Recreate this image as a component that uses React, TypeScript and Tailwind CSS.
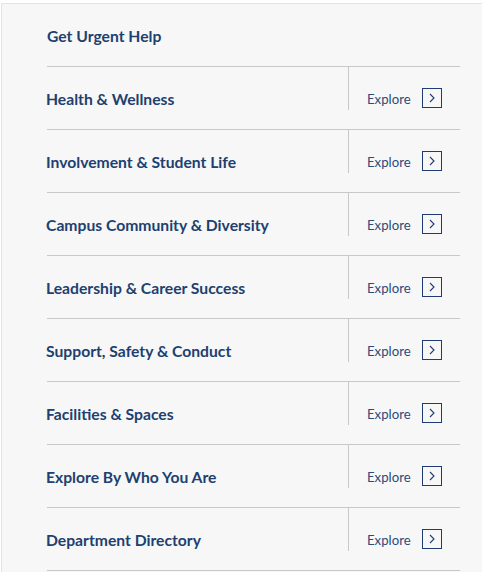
import React from "react";

const sections = [
  "Health & Wellness",
  "Involvement & Student Life",
  "Campus Community & Diversity",
  "Leadership & Career Success",
  "Support, Safety & Conduct",
  "Facilities & Spaces",
  "Explore By Who You Are",
  "Department Directory",
];

const ChevronBox = () => (
  <span className="flex h-5 w-5 items-center justify-center border border-[#1f3d73]">
    <svg width="8" height="10" viewBox="0 0 8 10" fill="none">
      <path d="M2 1l4 4-4 4" stroke="#1f3d73" strokeWidth="1.1" />
    </svg>
  </span>
);

const App = () => {
  return (
    <div
      className="h-[572px] w-[482px] overflow-hidden bg-white pt-[3px] pl-[1px]"
      style={{ fontFamily: '"Lato", "Open Sans", sans-serif' }}
    >
      <div className="h-full border-t border-l border-[#e3e3e3] bg-[#f7f7f7] pl-[44px] pr-[22px]">
        {/* Urgent help */}
        <div className="flex h-[62px] items-center pt-[3px] pl-[1px]">
          <span className="text-[15.7px] font-bold text-[#213f6f]">Get Urgent Help</span>
        </div>

        {/* Sections */}
        {sections.map((s) => (
          <div key={s} className="ml-[1px] flex h-[63px] border-t border-[#c8c8c8]">
            <div className="flex flex-1 items-center pt-[3px]">
              <span className="-ml-[1px] text-[15.7px] font-bold text-[#213f6f]">{s}</span>
            </div>
            <div className="w-[112px]">
              <div className="flex h-[43px] items-end gap-[11px] border-l border-[#c8c8c8] pb-[2px] pl-[18px]">
                <span className="-mb-[2px] text-[13.2px] text-[#2c4a7c]">Explore</span>
                <ChevronBox />
              </div>
            </div>
          </div>
        ))}
        <div className="ml-[1px] border-t border-[#c8c8c8]" />
      </div>
    </div>
  );
};

export default App;
